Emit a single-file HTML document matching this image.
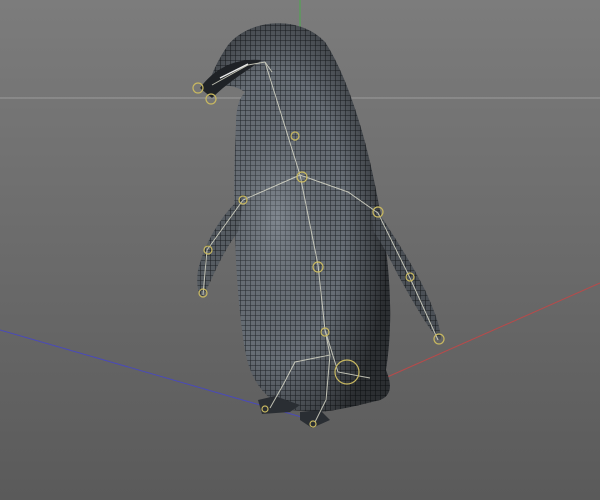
<!DOCTYPE html>
<html><head><style>html,body{margin:0;padding:0;width:600px;height:500px;overflow:hidden;background:#6c6c6c}</style></head>
<body>
<svg width="600" height="500" viewBox="0 0 600 500" xmlns="http://www.w3.org/2000/svg">
<defs>
<linearGradient id="bg" x1="0" y1="0" x2="0" y2="1"><stop offset="0" stop-color="#7c7c7c"/><stop offset="1" stop-color="#5a5a5a"/></linearGradient>
<pattern id="grid" width="5" height="5" patternUnits="userSpaceOnUse">
<rect width="5" height="5" fill="#6c737b"/>
<path d="M0 0H5M0 0V5" stroke="#23272c" stroke-width="1.1"/>
</pattern>
<radialGradient id="shade" cx="0.38" cy="0.5" r="0.62"><stop offset="0" stop-color="#b0b8c0" stop-opacity="0.3"/><stop offset="0.6" stop-color="#000" stop-opacity="0.05"/><stop offset="1" stop-color="#000" stop-opacity="0.6"/></radialGradient>
</defs>
<rect width="600" height="500" fill="url(#bg)"/>
<line x1="0" y1="98" x2="600" y2="98" stroke="#9c9c9c" stroke-width="1"/>
<line x1="300" y1="0" x2="300" y2="30" stroke="#4caa4c" stroke-width="1"/>
<line x1="0" y1="330" x2="305" y2="418" stroke="#4a4ab8" stroke-width="1"/>
<line x1="385" y1="378" x2="600" y2="283" stroke="#b84a4a" stroke-width="1"/>
<g>
<path d="M228 45 C250 18 300 15 325 42 C345 72 365 130 378 200 C390 260 394 320 386 370 C392 385 392 395 380 400 C360 405 340 410 320 412 L290 410 C265 400 250 380 245 350 C235 290 232 200 236 125 C236 105 240 98 245 92 C235 85 220 82 207 92 C210 75 218 60 228 45 Z" fill="url(#grid)"/>
<path d="M228 45 C250 18 300 15 325 42 C345 72 365 130 378 200 C390 260 394 320 386 370 C392 385 392 395 380 400 C360 405 340 410 320 412 L290 410 C265 400 250 380 245 350 C235 290 232 200 236 125 C236 105 240 98 245 92 C235 85 220 82 207 92 C210 75 218 60 228 45 Z" fill="url(#shade)"/>
<path d="M244 195 C225 210 205 240 198 270 C196 285 198 295 203 296 C210 285 220 255 238 232 Z" fill="url(#grid)"/>
<path d="M244 195 C225 210 205 240 198 270 C196 285 198 295 203 296 C210 285 220 255 238 232 Z" fill="#000" opacity="0.2"/>
<path d="M370 200 C390 230 410 260 425 290 C435 312 442 330 440 340 C430 332 412 300 398 275 C388 255 380 240 374 232 Z" fill="url(#grid)"/>
<path d="M370 200 C390 230 410 260 425 290 C435 312 442 330 440 340 C430 332 412 300 398 275 C388 255 380 240 374 232 Z" fill="#000" opacity="0.3"/>
<path d="M200 88 C215 68 235 58 262 60 C248 70 228 82 212 98 Z" fill="#1f2226"/>
<path d="M220 78 L248 64" stroke="#e8e8e8" stroke-width="1.5"/>
<path d="M258 400 L275 396 L300 405 L290 412 L262 414 Z" fill="#2a2e33"/>
<path d="M300 412 L320 410 L330 420 L312 428 L300 420 Z" fill="#2a2e33"/>
</g>
<g fill="none" stroke="#d8d8c8" stroke-width="1" opacity="0.85">
<path d="M265 62 L300 175 L318 265 L325 330 L338 372 L370 378"/>
<path d="M300 175 L243 200 L207 250 L203 295"/>
<path d="M300 175 L348 192 L378 213 L410 278 L438 340"/>
<path d="M325 330 L330 355 L295 362 L283 385 L270 408"/>
<path d="M330 355 L326 400 L315 422"/>
<path d="M212 85 L248 65 L265 62 L272 72"/>
</g>
<g fill="none" stroke="#c8b860" stroke-width="1.2">
<circle cx="198" cy="88" r="5"/><circle cx="211" cy="99" r="5"/>
<circle cx="295" cy="136" r="4"/><circle cx="302" cy="177" r="5"/>
<circle cx="243" cy="200" r="4"/><circle cx="378" cy="212" r="5"/>
<circle cx="318" cy="267" r="5"/><circle cx="208" cy="250" r="4"/>
<circle cx="203" cy="293" r="4"/><circle cx="410" cy="277" r="4"/>
<circle cx="439" cy="339" r="5"/><circle cx="347" cy="372" r="12"/>
<circle cx="325" cy="332" r="4"/><circle cx="265" cy="409" r="3"/><circle cx="313" cy="424" r="3"/>
</g>
</svg>
</body></html>
